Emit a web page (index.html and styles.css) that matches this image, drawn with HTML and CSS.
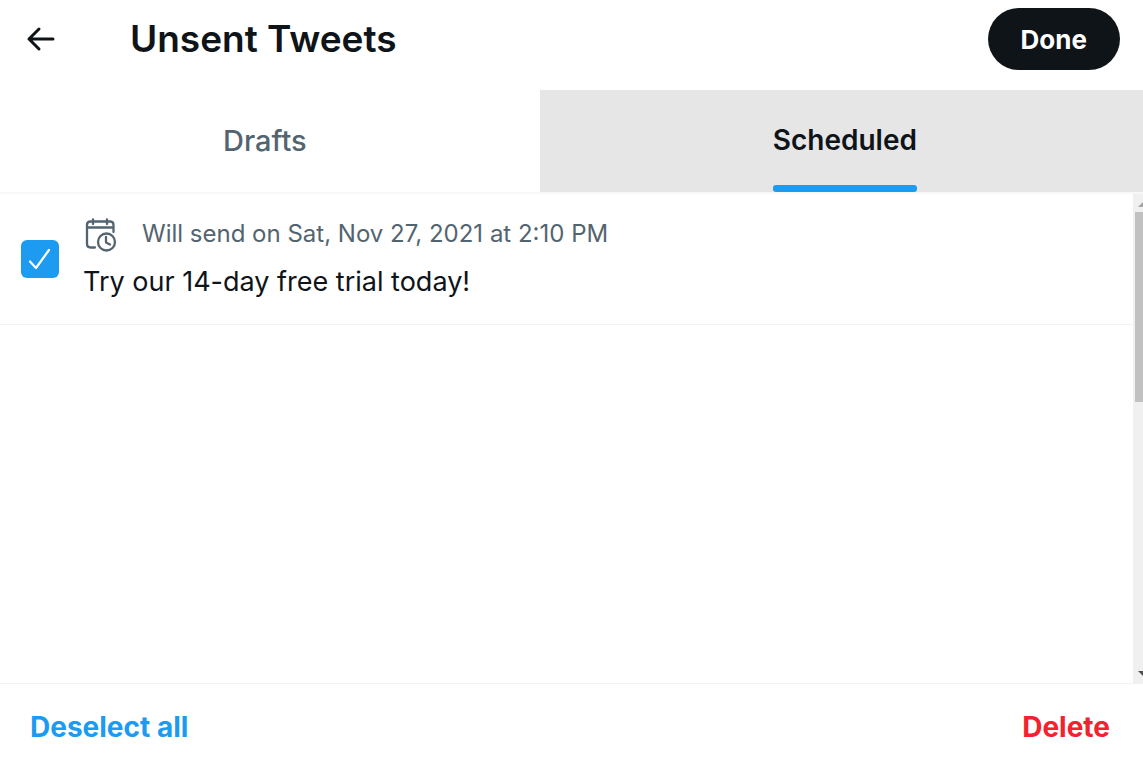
FILE: index.html
```
<!DOCTYPE html>
<html lang="en">
<head>
    <meta charset="UTF-8">
    <meta name="viewport" content="width=device-width, initial-scale=1.0">
    <title>Unsent Tweets</title>
    <link rel="stylesheet" href="styles.css">
</head>
<body>
    <header class="header">
        <button class="back-btn" type="button" aria-label="Back">
            <svg width="30" height="26" viewBox="0 0 30 26" fill="none" stroke="currentColor" stroke-width="3" stroke-linecap="round" stroke-linejoin="round">
                <path d="M13 3 L3 13 L13 23 M3 13 H27"/>
            </svg>
        </button>
        <h1>Unsent Tweets</h1>
        <button class="done-btn" type="button">Done</button>
    </header>

    <nav class="tabs" role="tablist">
        <button class="tab" type="button" role="tab" aria-selected="false"><span>Drafts</span></button>
        <button class="tab active" type="button" role="tab" aria-selected="true"><span>Scheduled</span></button>
    </nav>

    <main class="content">
        <div class="list">
            <label class="tweet">
                <span class="check">
                    <input type="checkbox" checked>
                    <svg width="38" height="38" viewBox="0 0 38 38" fill="none" stroke="#fff" stroke-width="2.2" stroke-linecap="round" stroke-linejoin="round">
                        <path d="M9 21.5 L15 28 L28 10"/>
                    </svg>
                </span>
                <span class="details">
                    <span class="schedule">
                        <svg width="34" height="36" viewBox="0 0 34 36" fill="none" stroke="currentColor" stroke-width="2.3" stroke-linecap="round" stroke-linejoin="round">
                            <path d="M12 31.500 H7.500 Q4 31.500 4 28 V9 Q4 5.500 7.500 5.500 H27 Q30.500 5.500 30.500 9 V16 M4 11.500 H30.500 M10 3.500 V8 M24 3.500 V8"/>
                            <circle cx="23.500" cy="26" r="8.500"/>
                            <path d="M23 21 V26.500 L27 28.500"/>
                        </svg>
                        <span>Will send on Sat, Nov 27, 2021 at 2:10 PM</span>
                    </span>
                    <span class="message">Try our 14-day free trial today!</span>
                </span>
            </label>
        </div>
        <div class="scrollbar" aria-hidden="true">
            <span class="arrow up"></span>
            <span class="thumb"></span>
            <span class="arrow down"></span>
        </div>
    </main>

    <footer class="footer">
        <button class="text-btn" type="button">Deselect all</button>
        <button class="text-btn delete" type="button">Delete</button>
    </footer>
</body>
</html>
```

FILE: styles.css
```
* {
    box-sizing: border-box;
}

body {
    display: flex;
    flex-direction: column;
    height: 100vh;
    margin: 0;
    overflow: hidden;
    font-family: Inter, "Liberation Sans", sans-serif;
    color: #0f1419;
    background-color: #fff;
}

button {
    padding: 0;
    border: none;
    background: none;
    font-family: inherit;
    color: inherit;
    cursor: pointer;
}

svg {
    display: block;
}

.header {
    display: flex;
    align-items: center;
    padding: 8px 23px 20px 26px;
}

.back-btn {
    margin-right: 74px;
}

h1 {
    flex: 1;
    margin: 0;
    font-size: 37px;
    font-weight: 600;
    line-height: 48px;
}

.done-btn {
    height: 62px;
    padding: 0 33px;
    border-radius: 31px;
    background-color: #0f1419;
    color: #fff;
    font-size: 26px;
    font-weight: 700;
}

/* the tab strip runs slightly past both edges */
.tabs {
    display: flex;
    height: 103px;
    margin: 0 -7px 0 -10px;
    flex-shrink: 0;
}

.tab {
    display: flex;
    flex: 1 1 auto;
    justify-content: center;
    border-bottom: 1px solid #f7f9f9;
    color: #536471;
    font-size: 29px;
    font-weight: 500;
}

.tab span {
    display: flex;
    align-items: center;
    height: 102px;
    padding-bottom: 2px;
}

.tab.active {
    background-color: #e6e6e6;
    color: #0f1419;
    font-size: 28px;
    font-weight: 600;
}

.tab.active span {
    position: relative;
}

.tab.active span::after {
    content: "";
    position: absolute;
    bottom: 0;
    left: 0;
    width: 100%;
    height: 7px;
    border-radius: 3px;
    background-color: #1d9bf0;
}

.content {
    display: flex;
    flex: 1;
    min-height: 0;
    border-top: 1px solid #f7f9f9;
}

.list {
    flex: 1;
    border-bottom: 1px solid #eff3f4;
}

.tweet {
    display: flex;
    align-items: center;
    gap: 24px;
    padding: 20px 21px;
    border-bottom: 1px solid #eff3f4;
}

.check {
    display: grid;
}

.check input,
.check svg {
    grid-area: 1 / 1;
}

.check input {
    appearance: none;
    width: 38px;
    height: 38px;
    margin: 0;
    border-radius: 6px;
    background-color: #1d9bf0;
}

.check svg {
    position: relative;
    pointer-events: none;
}

.schedule {
    display: flex;
    align-items: center;
    gap: 25px;
    height: 40px;
    color: #536471;
    font-size: 24px;
    line-height: 36px;
}

.message {
    display: block;
    margin-top: 6px;
    font-size: 27px;
    line-height: 44px;
}

.scrollbar {
    display: flex;
    flex-direction: column;
    align-items: flex-end;
    width: 10px;
    padding: 8px 0;
    overflow: hidden;
    background-color: #f0f0f0;
}

.arrow {
    width: 10px;
    height: 5px;
    margin-right: -5px;
    flex-shrink: 0;
}

.arrow.up {
    background-color: #a3a3a3;
    clip-path: polygon(50% 0, 100% 100%, 0 100%);
}

.arrow.down {
    margin-top: auto;
    background-color: #505050;
    clip-path: polygon(0 0, 100% 0, 50% 100%);
}

.thumb {
    width: 8px;
    height: 40%;
    margin-top: 5px;
    background-color: #c1c1c1;
}

.footer {
    display: flex;
    justify-content: space-between;
    align-items: center;
    height: 75px;
    padding: 10px 33px 0 30px;
    flex-shrink: 0;
}

.text-btn {
    color: #1d9bf0;
    font-size: 28px;
    font-weight: 700;
    line-height: 40px;
}

.text-btn.delete {
    color: #f4212e;
}
```
